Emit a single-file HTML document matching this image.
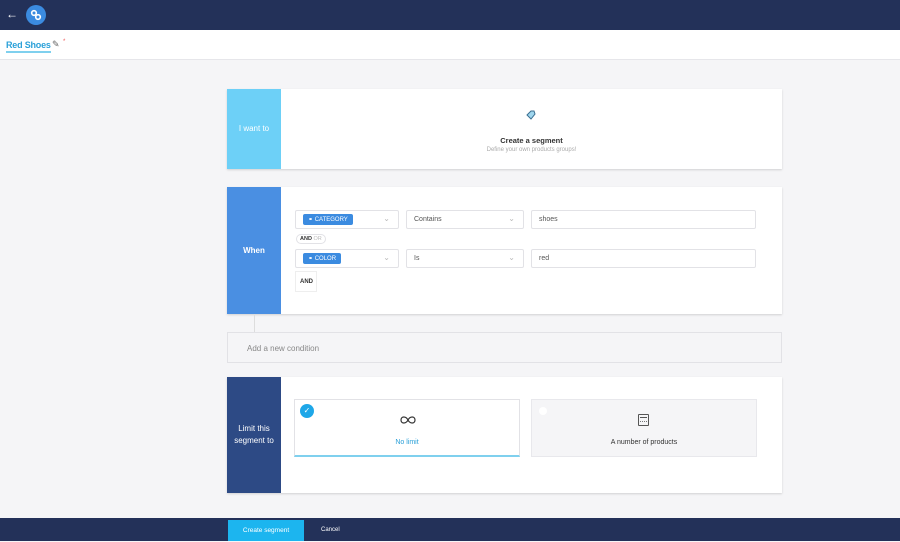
<!DOCTYPE html>
<html><head><style>
*{box-sizing:border-box;margin:0;padding:0}
body{width:900px;height:541px;background:#f5f5f7;font-family:"Liberation Sans",sans-serif;position:relative;overflow:hidden;color:#333}
.abs{position:absolute}
.top{left:0;top:0;width:900px;height:30px;background:#233159}
.hdr{left:0;top:30px;width:900px;height:30px;background:#fff;border-bottom:1px solid #e6e6ea}
.card{left:227px;width:555px;background:#fff;box-shadow:0 1px 2px rgba(0,0,0,.15)}
.lab{position:absolute;left:0;top:0;bottom:0;width:54px;color:#fff;font-size:8px;font-weight:bold;display:flex;align-items:center;justify-content:center;text-align:center;line-height:12px}
.sel{position:absolute;height:19px;border:1px solid #e2e2e6;border-radius:2px;background:#fff;font-size:7px;color:#555;padding:5px 0 0 7px}
.chev{position:absolute;right:8px;top:3px;color:#bbb;font-size:8px}
.tag{display:inline-block;background:#3b8be0;color:#fff;font-size:6px;padding:2px 5px;border-radius:2px;margin-top:-2px}
</style></head><body>
<div class="abs top">
 <div class="abs" style="left:6px;top:7px;color:#fff;font-size:12px">←</div>
 <div class="abs" style="left:26px;top:5px;width:20px;height:20px;border-radius:50%;background:#3b8be0">
  <svg width="20" height="20" viewBox="0 0 20 20"><g fill="none" stroke="#fff" stroke-width="1.6"><circle cx="8" cy="8" r="2.3"/><circle cx="12" cy="12" r="2.3"/></g></svg>
 </div>
</div>
<div class="abs hdr">
 <div class="abs" style="left:6px;top:10px;font-size:9px;font-weight:bold;color:#2aa0d8;border-bottom:2px solid #7fd0ee;padding-bottom:1px;letter-spacing:-0.2px">Red Shoes</div>
 <div class="abs" style="left:52px;top:9px;font-size:9px;color:#666">✎</div>
 <div class="abs" style="left:63px;top:9px;font-size:6px;color:#e55">*</div>
</div>

<div class="abs card" style="top:89px;height:80px">
 <div class="lab" style="background:#6dd0f7;font-weight:normal">I want to</div>
 <svg class="abs" style="left:298px;top:20px" width="12" height="12" viewBox="0 0 12 12"><path d="M2 6 L6 2 L9 2 L10 5 L6 10 Z" fill="#9fd6ee" stroke="#3a6e90" stroke-width="1"/></svg>
 <div class="abs" style="left:54px;right:0;top:47px;text-align:center;font-size:7.5px;font-weight:bold;color:#333">Create a segment</div>
 <div class="abs" style="left:54px;right:0;top:58px;text-align:center;font-size:6px;color:#aaa">Define your own products groups!</div>
</div>

<div class="abs card" style="top:187px;height:127px">
 <div class="lab" style="background:#4a8fe2">When</div>
 <div class="sel" style="left:68px;top:23px;width:104px"><span class="tag">⚭ CATEGORY</span><span class="chev">⌄</span></div>
 <div class="sel" style="left:179px;top:23px;width:118px">Contains<span class="chev">⌄</span></div>
 <div class="sel" style="left:304px;top:23px;width:225px">shoes</div>
 <div class="abs" style="left:69px;top:47px;font-size:5.5px;border:1px solid #e2e2e6;border-radius:6px;padding:1px 3px;font-weight:bold">AND <span style="color:#bbb;font-weight:normal">OR</span></div>
 <div class="sel" style="left:68px;top:62px;width:104px"><span class="tag">⚭ COLOR</span><span class="chev">⌄</span></div>
 <div class="sel" style="left:179px;top:62px;width:118px">Is<span class="chev">⌄</span></div>
 <div class="sel" style="left:304px;top:62px;width:225px">red</div>
 <div class="abs" style="left:68px;top:84px;width:22px;height:21px;border:1px solid #eee;font-size:6px;font-weight:bold;padding:7px 0 0 4px">AND</div>
</div>
<div class="abs" style="left:254px;top:314px;width:1px;height:18px;background:#ddd"></div>
<div class="abs" style="left:227px;top:332px;width:555px;height:31px;border:1px solid #e2e2e6;background:#f5f5f7;font-size:8px;color:#888;padding:11px 0 0 19px">Add a new condition</div>

<div class="abs card" style="top:377px;height:116px">
 <div class="lab" style="background:#2d4a85;font-weight:normal">Limit this<br>segment to</div>
 <div class="abs" style="left:67px;top:22px;width:226px;height:58px;border:1px solid #e2e2e6;border-bottom:2px solid #7fd0ee;background:#fff">
  <div class="abs" style="left:5px;top:4px;width:14px;height:14px;border-radius:50%;background:#1ea7e8;color:#fff;font-size:8px;text-align:center;line-height:14px">✓</div>
  <svg class="abs" style="left:104px;top:15px" width="18" height="10" viewBox="0 0 18 10"><path d="M9 5 C7 1 2 1 2 5 C2 9 7 9 9 5 C11 1 16 1 16 5 C16 9 11 9 9 5Z" fill="none" stroke="#333" stroke-width="1.2"/></svg>
  <div class="abs" style="left:0;right:0;top:39px;text-align:center;font-size:7px;color:#2aa0d8">No limit</div>
 </div>
 <div class="abs" style="left:304px;top:22px;width:226px;height:58px;border:1px solid #e8e8ec;background:#f5f5f7">
  <div class="abs" style="left:7px;top:7px;width:8px;height:8px;border-radius:50%;background:#fff"></div>
  <div class="abs" style="left:106px;top:14px;width:11px;height:12px;border:1.2px solid #555;border-radius:1px"><div style="margin:2px 1px 0;border-top:1px solid #555;height:5px;border-bottom:1px dotted #777"></div></div>
  <div class="abs" style="left:0;right:0;top:39px;text-align:center;font-size:7px;color:#333">A number of products</div>
 </div>
</div>

<div class="abs" style="left:0;top:518px;width:900px;height:23px;background:#233159">
 <div class="abs" style="left:228px;top:2px;width:76px;height:21px;background:#1cb5ef;color:#fff;font-size:6.5px;text-align:center;line-height:22px">Create segment</div>
 <div class="abs" style="left:321px;top:9px;color:#fff;font-size:6px">Cancel</div>
</div>
</body></html>
